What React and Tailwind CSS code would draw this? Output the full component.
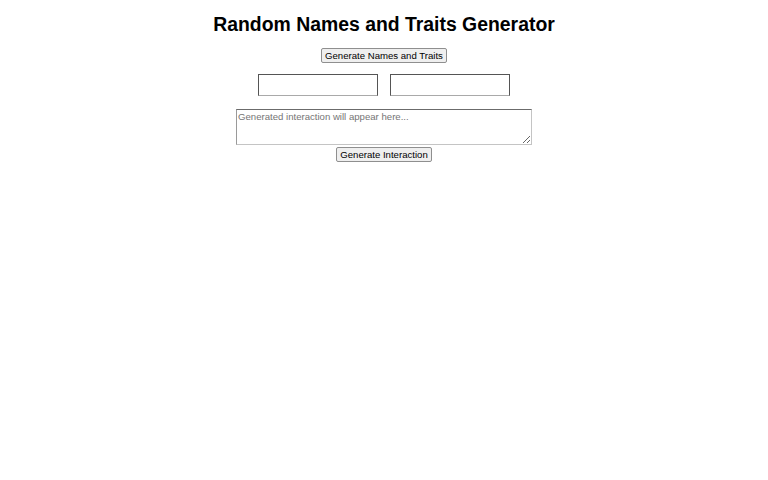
export default function App() {
  const font = { fontFamily: '"Liberation Sans", Arial, sans-serif' };
  return (
    <div className="min-h-[480px] w-full bg-white text-black flex flex-col items-center" style={font}>
      <h1 className="mt-[13px] text-[19.4px] leading-[22px] font-bold">Random Names and Traits Generator</h1>

      <button className="mt-[13px] h-[15px] px-[3px] text-[9.6px] leading-[11px] bg-[#efefef] border border-[#8f8f8f] rounded-[2px] text-black">
        Generate Names and Traits
      </button>

      <div className="mt-[11px] flex gap-[12px]">
        <input type="text" className="w-[120px] h-[22px] border border-[#555555] border-b-[#a9a9a9] bg-white text-[9.4px] px-[2px] outline-none" />
        <input type="text" className="w-[120px] h-[22px] border border-[#555555] border-b-[#a9a9a9] bg-white text-[9.4px] px-[2px] outline-none" />
      </div>

      <textarea
        placeholder="Generated interaction will appear here..."
        className="mt-[13px] w-[296px] h-[36px] border border-[#c4c4c4] border-t-[#6b6b6b] border-l-[#9a9a9a] bg-white text-[9.6px] leading-[11px] px-[1px] py-[1px] placeholder:text-[#757575] outline-none"
      />

      <button className="mt-[2px] h-[15px] px-[3px] text-[9.6px] leading-[11px] bg-[#efefef] border border-[#8f8f8f] rounded-[2px] text-black">
        Generate Interaction
      </button>
    </div>
  );
}
